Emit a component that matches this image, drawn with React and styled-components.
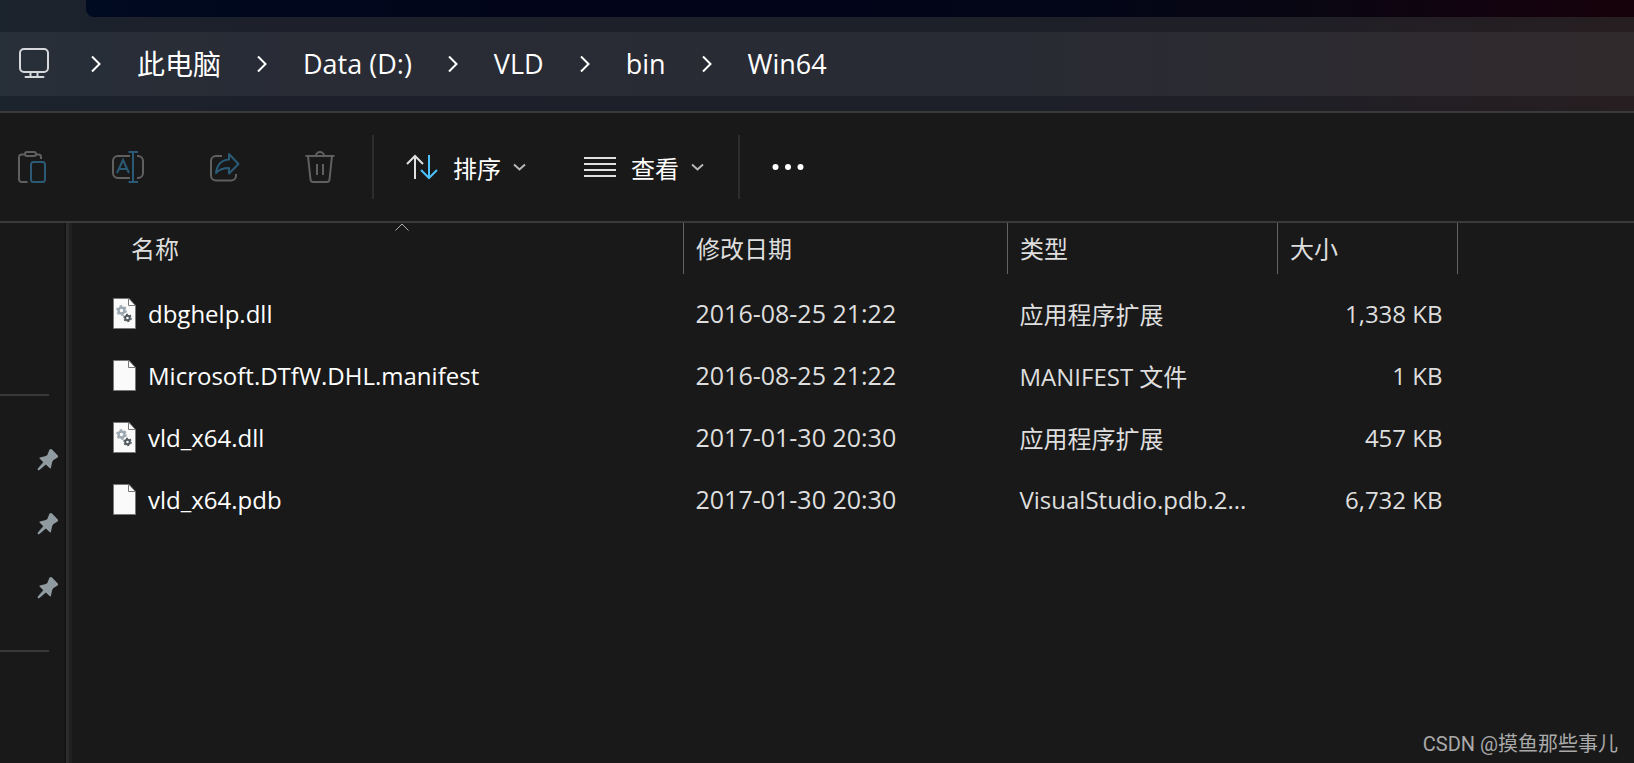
import React from "react"
import styled, { createGlobalStyle, css } from "styled-components"

const CRUMBS = ["此电脑", "Data (D:)", "VLD", "bin", "Win64"]

const FILES = [
  {
    name: "dbghelp.dll",
    date: "2016-08-25 21:22",
    type: "应用程序扩展",
    size: "1,338 KB",
    gears: true,
  },
  {
    name: "Microsoft.DTfW.DHL.manifest",
    date: "2016-08-25 21:22",
    type: "MANIFEST 文件",
    size: "1 KB",
  },
  {
    name: "vld_x64.dll",
    date: "2017-01-30 20:30",
    type: "应用程序扩展",
    size: "457 KB",
    gears: true,
  },
  {
    name: "vld_x64.pdb",
    date: "2017-01-30 20:30",
    type: "VisualStudio.pdb.2...",
    size: "6,732 KB",
  },
]

const PINS = [1, 2, 3]

const MonitorIcon = () => (
  <svg width="32" height="32" viewBox="0 0 32 32" fill="none" stroke="#d6d8dc" strokeWidth="2" strokeLinecap="round">
    <rect x="2" y="1" width="28" height="23" rx="4" />
    <path d="M12.500 25v4M19.500 25v4M7.500 29h18" />
  </svg>
)

const CrumbChevron = () => (
  <svg width="10" height="18" viewBox="0 0 10 18" fill="none" stroke="#fff" strokeWidth="2">
    <path d="M1 1.500l7.500 7.500L1 16.500" />
  </svg>
)

const PasteIcon = () => (
  <svg width="32" height="32" viewBox="0 0 32 32" fill="none" stroke="#606060" strokeWidth="2">
    <path d="M11.500 31H5.500a2.500 2.500 0 0 1-2.500-2.500V6a2.500 2.500 0 0 1 2.500-2.500H9M20 3.500h2.500A2.500 2.500 0 0 1 25 6v2" />
    <rect x="9" y="1" width="11" height="4" rx="2" />
    <rect x="15" y="11" width="14" height="20" rx="2.500" stroke="#2a5a75" />
  </svg>
)

const RenameIcon = () => (
  <svg width="32" height="32" viewBox="0 0 32 32" fill="none" stroke="#606060" strokeWidth="2">
    <path d="M18 5H6a5 5 0 0 0-5 5v12a5 5 0 0 0 5 5h12M25 5h1a5 5 0 0 1 5 5v12a5 5 0 0 1-5 5h-1" />
    <path d="M5 22l6-13 6 13M7.500 18h7M16.500 1H26M16.500 31H26M21 1v30" stroke="#2a5a75" />
  </svg>
)

const ShareIcon = () => (
  <svg width="32" height="32" viewBox="0 0 32 32" fill="none" stroke="#606060" strokeWidth="2">
    <path d="M14 5H8A5 5 0 0 0 3 10v14.500a5 5 0 0 0 5 5h15a5 5 0 0 0 5-5V23" />
    <path d="M21 3l9.500 10-9.500 9.500V17c-6 0-9.500 1-13 5C9 14 13.500 9 21 8.500z" stroke="#2a5a75" strokeLinejoin="round" />
  </svg>
)

const TrashIcon = () => (
  <svg width="32" height="32" viewBox="0 0 32 32" fill="none" stroke="#606060" strokeWidth="2">
    <path d="M1.500 5h29M12 5a4 4 0 0 1 8 0M4 5l2.500 23.500A2.500 2.500 0 0 0 9 31h14a2.500 2.500 0 0 0 2.500-2.500L28 5M13 13v11M19 13v11" />
  </svg>
)

const SortIcon = () => (
  <svg width="32" height="32" viewBox="0 0 32 32" fill="none" strokeWidth="2">
    <path d="M9 28V5M1 13l8-8 8 8" stroke="#e0e0e0" />
    <path d="M23 4v23M15 19l8 8 8-8" stroke="#4cc2ff" />
  </svg>
)

const ListIcon = () => (
  <svg width="32" height="32" viewBox="0 0 32 32" fill="none" stroke="#e0e0e0" strokeWidth="2">
    <path d="M0 7h32M0 13h32M0 19h32M0 25h32" />
  </svg>
)

const MenuChevron = () => (
  <svg width="14" height="14" viewBox="0 0 14 14" fill="none" stroke="#b8b8b8" strokeWidth="2">
    <path d="M1 4.500l5.500 5L12 4.500" />
  </svg>
)

const DotsIcon = () => (
  <svg width="32" height="32" viewBox="0 0 32 32" fill="#fff">
    <circle cx="3.500" cy="16" r="3" />
    <circle cx="16" cy="16" r="3" />
    <circle cx="28.500" cy="16" r="3" />
  </svg>
)

const PinIcon = () => (
  <svg width="22" height="22" viewBox="0 0 22 22" fill="#8f9ba1">
    <path d="M13.200.2c.6-.3 1.300-.1 1.800.4l5.800 6c.5.6.4 1.500-.3 1.900l-4.300 2.700-1 1.800-1.300 6c-.2.500-.6.600-1 .3L8.800 15.600l-6 5.200c-.6.500-1.300.6-1.800.2-.5-.5-.4-1.200 0-1.800l5.300-6L2.600 9.600c-.4-.5-.3-1 .3-1.200l6-1.400 1.400-1L12.400.8c.2-.3.500-.5.800-.6z" />
  </svg>
)

const SortCaret = () => (
  <svg width="14" height="8" viewBox="0 0 14 8" fill="none" stroke="#b0b0b0" strokeWidth="1">
    <path d="M.5 7.500l6.500-6.500 6.500 6.500" />
  </svg>
)

const FileIcon = ({ gears }) => (
  <svg width="23" height="31" viewBox="0 0 23 31">
    <path d="M.5.5h15.500l6.500 7v23H.5z" fill="#fafafa" stroke="#777" />
    <path d="M15.500.5v7h7" fill="none" stroke="#777" />
    {gears && (
      <g fill="none">
        <circle cx="8.500" cy="12.500" r="3" stroke="#9ba7b0" strokeWidth="2.400" />
        <circle cx="8.500" cy="12.500" r="4.700" stroke="#9ba7b0" strokeWidth="1.400" strokeDasharray="2.460" />
        <circle cx="14.500" cy="20" r="2.300" stroke="#50595f" strokeWidth="2" />
        <circle cx="14.500" cy="20" r="3.700" stroke="#50595f" strokeWidth="1.200" strokeDasharray="1.940" />
      </g>
    )}
  </svg>
)

const App = () => {
  return (
    <Explorer>
      <GlobalStyle />
      <TitleArea>
        <TabStrip />
        <AddressBar aria-label="地址">
          <CrumbIcon aria-label="此电脑">
            <MonitorIcon />
          </CrumbIcon>
          {CRUMBS.map((crumb, index) => (
            <React.Fragment key={crumb}>
              <CrumbChevron />
              <Crumb href="#" $root={index === 0}>
                {crumb}
              </Crumb>
            </React.Fragment>
          ))}
        </AddressBar>
      </TitleArea>
      <Toolbar>
        <IconButtons>
          <IconButton aria-label="粘贴" disabled>
            <PasteIcon />
          </IconButton>
          <IconButton aria-label="重命名" disabled>
            <RenameIcon />
          </IconButton>
          <IconButton aria-label="共享" disabled>
            <ShareIcon />
          </IconButton>
          <IconButton aria-label="删除" disabled>
            <TrashIcon />
          </IconButton>
        </IconButtons>
        <Separator />
        <MenuButtons>
          <MenuButton>
            <SortIcon />
            <MenuLabel>
              排序
              <MenuChevron />
            </MenuLabel>
          </MenuButton>
          <MenuButton>
            <ListIcon />
            <MenuLabel>
              查看
              <MenuChevron />
            </MenuLabel>
          </MenuButton>
        </MenuButtons>
        <Separator />
        <MenuButton aria-label="查看更多">
          <DotsIcon />
        </MenuButton>
      </Toolbar>
      <Body>
        <Sidebar>
          <Divider />
          <PinList>
            {PINS.map((pin) => (
              <Pin key={pin}>
                <PinIcon />
              </Pin>
            ))}
          </PinList>
          <Divider />
        </Sidebar>
        <Splitter />
        <Content>
          <FileTable>
            <colgroup>
              <NameCol />
              <DateCol />
              <TypeCol />
              <SizeCol />
            </colgroup>
            <thead>
              <tr>
                <HeadCell $first>
                  名称
                  <CaretHolder>
                    <SortCaret />
                  </CaretHolder>
                </HeadCell>
                <HeadCell>修改日期</HeadCell>
                <HeadCell>类型</HeadCell>
                <HeadCell>大小</HeadCell>
              </tr>
            </thead>
            <tbody>
              {FILES.map((file) => (
                <tr key={file.name}>
                  <Cell>
                    <FileName>
                      <FileIcon gears={file.gears} />
                      {file.name}
                    </FileName>
                  </Cell>
                  <DateCell>{file.date}</DateCell>
                  <Cell>{file.type}</Cell>
                  <SizeCell>{file.size}</SizeCell>
                </tr>
              ))}
            </tbody>
          </FileTable>
          <Watermark>CSDN @摸鱼那些事儿</Watermark>
        </Content>
      </Body>
    </Explorer>
  )
}

export default App

const GlobalStyle = createGlobalStyle`
  * {
    box-sizing: border-box;
  }

  body {
    margin: 0;
    background-color: #191919;
    font-family: "Open Sans", "Noto Sans CJK SC", sans-serif;
  }

  svg {
    display: block;
    flex-shrink: 0;
  }
`

const flex = css`
  display: flex;
  align-items: center;
`

const Explorer = styled.main`
  display: flex;
  flex-direction: column;
  min-height: 100vh;
  overflow: hidden;
  color: #fff;
`

const TitleArea = styled.header`
  padding-bottom: 15px;
  background: linear-gradient(
    90deg,
    #1b232d 0%,
    #1d1f2a 20%,
    #1d1f29 62%,
    #201f26 80%,
    #241e22 92%,
    #261e21 100%
  );
  border-bottom: 2px solid #3a3a3a;
`

const TabStrip = styled.div`
  height: 17px;
  margin: 0 0 15px 86px;
  border-bottom-left-radius: 8px;
  background: linear-gradient(
    90deg,
    #000a20 0%,
    #02051a 30%,
    #020618 62%,
    #0a0612 80%,
    #12030f 91%,
    #16020a 100%
  );
`

const AddressBar = styled.nav`
  ${flex};
  height: 64px;
  padding-left: 18px;
  gap: 36px;
  background-color: rgba(255, 255, 255, 0.055);
`

const CrumbIcon = styled.button`
  padding: 0 5px 0 0;
  border: 0;
  background: none;
`

const Crumb = styled.a`
  color: #fff;
  font-size: ${({ $root }) => ($root ? "28px" : "27px")};
  line-height: 40px;
  text-decoration: none;
  white-space: nowrap;
`

const Toolbar = styled.section`
  ${flex};
  height: 110px;
  border-bottom: 2px solid #3a3a3a;
`

const IconButtons = styled.div`
  ${flex};
  gap: 32px;
`

const IconButton = styled.button`
  ${flex};
  justify-content: center;
  width: 64px;
  height: 64px;
  padding: 0;
  border: 0;
  background: none;
`

const Separator = styled.div`
  width: 2px;
  height: 64px;
  margin: 0 20px;
  background-color: #2d2d2d;
`

const MenuButtons = styled.div`
  ${flex};
  gap: 32px;
`

const MenuButton = styled.button`
  ${flex};
  gap: 15px;
  height: 64px;
  padding: 0 13px 0 12px;
  border: 0;
  background: none;
  color: #fff;
  font-family: inherit;
  font-size: 24px;
`

const MenuLabel = styled.span`
  ${flex};
  gap: 12px;
`

const Body = styled.div`
  flex: 1;
  display: flex;
`

const Sidebar = styled.aside`
  width: 64px;
  padding-top: 171px;
`

const Divider = styled.div`
  width: 49px;
  height: 2px;
  background-color: #383838;
`

const PinList = styled.ul`
  margin: 0;
  padding: 32px 0 30px;
  list-style: none;
`

const Pin = styled.li`
  ${flex};
  height: 64px;
  padding-left: 37px;
`

const Splitter = styled.div`
  width: 8px;
  border-left: 2px solid #141414;
  border-right: 3px solid #202020;
  background-color: #2b2b2b;
`

const Content = styled.section`
  flex: 1;
  display: flex;
  flex-direction: column;
  justify-content: space-between;
  padding-left: 41px;
`

const FileTable = styled.table`
  width: 1345px;
  table-layout: fixed;
  border-collapse: collapse;
`

const NameCol = styled.col``

const DateCol = styled.col`
  width: 324px;
`

const TypeCol = styled.col`
  width: 270px;
`

const SizeCol = styled.col`
  width: 180px;
`

const HeadCell = styled.th`
  position: relative;
  height: 51px;
  padding: 0 12px 0 ${({ $first }) => ($first ? "18px" : "12px")};
  border-right: 1px solid #636363;
  color: #dedede;
  font-size: 24px;
  font-weight: normal;
  line-height: 32px;
  text-align: left;
`

const CaretHolder = styled.span`
  position: absolute;
  top: 0;
  left: 7px;
  right: 0;
  display: flex;
  justify-content: center;
`

const Cell = styled.td`
  height: 62px;
  padding: 0 0 0 12px;
  color: #dedede;
  font-size: 24px;
  white-space: nowrap;

  &:first-child {
    padding-left: 0;
    color: #fff;
  }

  tr:first-child & {
    height: 70px;
    padding-top: 8px;
  }
`

const DateCell = styled(Cell)`
  font-size: 25px;
`

const SizeCell = styled(Cell)`
  padding-right: 15px;
  text-align: right;
`

const FileName = styled.span`
  ${flex};
  gap: 12px;
`

const Watermark = styled.footer`
  padding: 0 16px 5px 0;
  color: #a9a9a9;
  font-family: Roboto, "Noto Sans CJK SC", sans-serif;
  font-size: 20px;
  line-height: 28px;
  text-align: right;
`
